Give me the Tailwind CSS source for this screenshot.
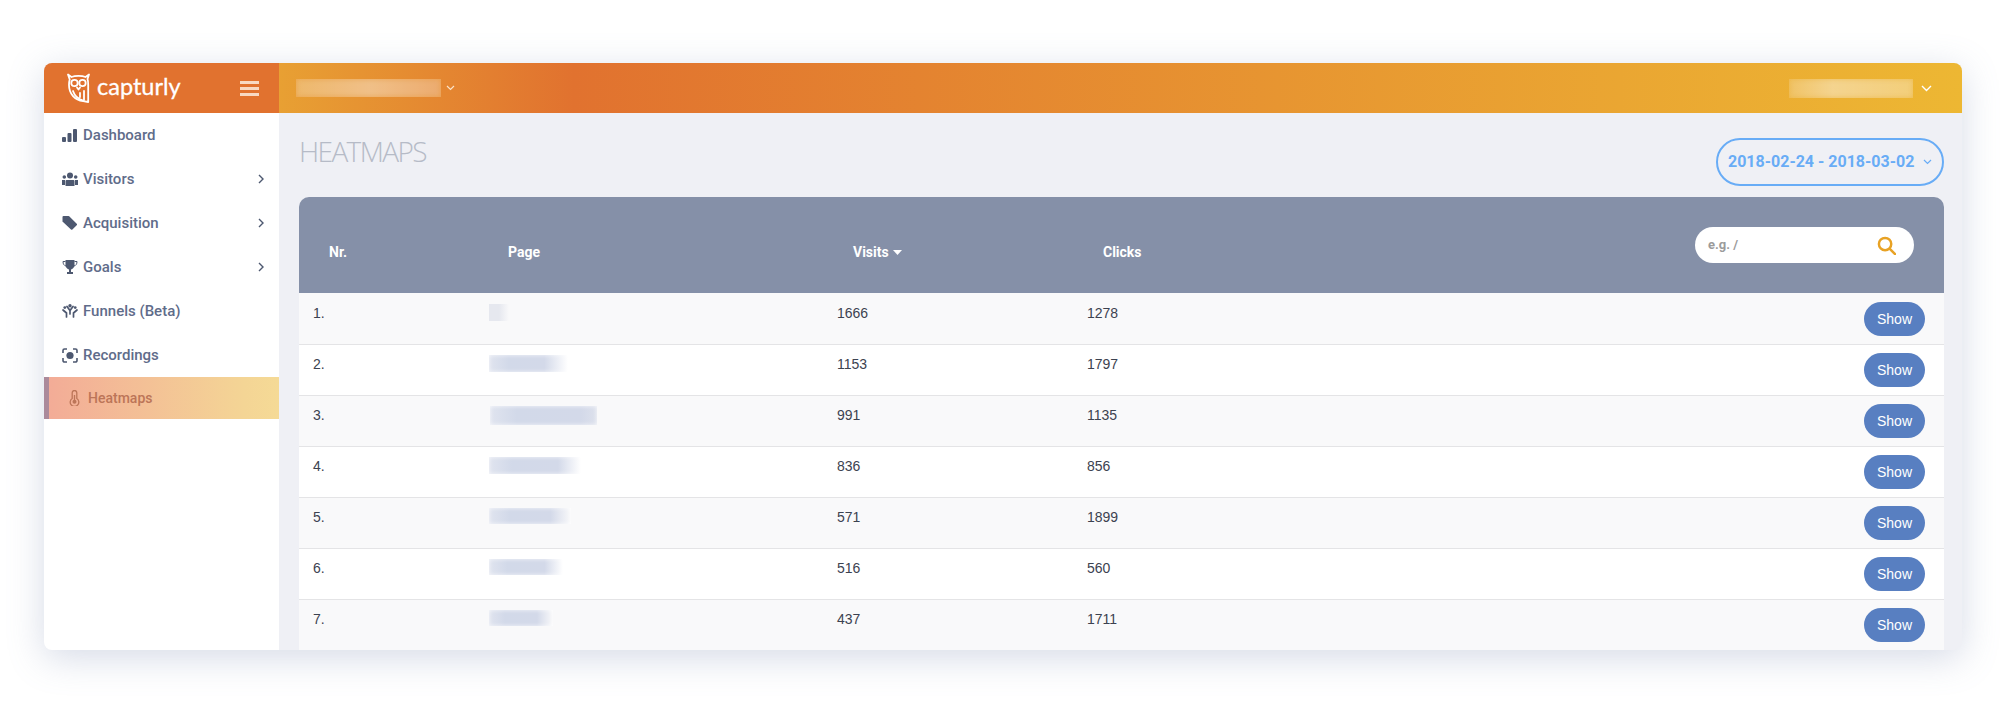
<!DOCTYPE html>
<html lang="en">
<head>
  <meta charset="UTF-8">
  <title>Heatmaps - Capturly</title>
  <script src="https://cdn.jsdelivr.net/npm/@tailwindcss/browser@4"></script>
</head>
<body class="bg-white h-[720px] overflow-hidden font-['Roboto',sans-serif]">
  <div class="pt-[63px] pl-[44px]">
    <!-- App window -->
    <div class="w-[1918px] h-[587px] rounded-[8px] overflow-hidden bg-[#eff0f5] shadow-[0_8px_36px_rgba(120,135,175,0.3)] flex flex-col">
      <!-- Top bar -->
      <header class="h-[50px] shrink-0 flex">
        <div class="w-[235px] shrink-0 bg-[#e1722f] flex items-center pl-[23px] pr-[20px]">
          <svg class="w-[23px] h-[30px] mr-[7px]" viewBox="0 0 23 30" fill="none" stroke="white" stroke-width="1.8" stroke-linejoin="round" stroke-linecap="round">
            <path d="M1 1.500l3.500 2.500C8 2.500 15 2.500 18.500 4L22 1.500l-1.500 4.500c.7 2 .7 4 .7 6V29l-5-.8C8 27 2 21 2 12c0-2 .2-4 .7-5.500z"/>
            <circle cx="7.500" cy="10" r="3.200"/>
            <circle cx="15.500" cy="10" r="3.200"/>
            <path d="M10 14.500l1.500 2 1.500-2"/>
            <path d="M6 18c1.500 4.500 5 8 10 9.500M17 27V18M13 24v-4"/>
          </svg>
          <span class="text-white text-[23.5px] leading-none font-['Lato',sans-serif] [-webkit-text-stroke:0.3px_white] -mt-[3px]">capturly</span>
          <div class="ml-auto flex flex-col gap-[3px] w-[19px] mt-[1px]">
            <span class="h-[3px] bg-[#f8d9c2]"></span>
            <span class="h-[3px] bg-[#f8d9c2]"></span>
            <span class="h-[3px] bg-[#f8d9c2]"></span>
          </div>
        </div>
        <div class="flex-1 flex items-center pl-[17px] pr-[30px] bg-[linear-gradient(90deg,#e8a033_0%,#e1722f_17.5%,#edb733_100%)]">
          <div class="w-[145px] h-[18px] bg-[linear-gradient(90deg,rgba(255,255,255,0.28),rgba(255,255,255,0.42)_50%,rgba(255,255,255,0.3))] shadow-[inset_0_0_5px_rgba(232,150,50,0.6)]"></div>
          <svg class="w-[9px] h-[6px] ml-[5px]" viewBox="0 0 9 6" fill="none" stroke="#fbe3c8" stroke-width="1.2"><path d="M1 1l3.500 3.500L8 1"/></svg>
          <div class="ml-auto w-[124px] h-[19px] bg-[linear-gradient(90deg,rgba(255,255,255,0.25),rgba(255,255,255,0.45)_35%,rgba(255,255,255,0.35))] shadow-[inset_0_0_5px_rgba(235,175,50,0.6)]"></div>
          <svg class="w-[11px] h-[7px] ml-[8px]" viewBox="0 0 11 7" fill="none" stroke="#fff" stroke-width="1.4"><path d="M1 1l4.500 4.500L10 1"/></svg>
        </div>
      </header>

      <div class="flex flex-1 min-h-0">
        <!-- Sidebar -->
        <aside class="w-[235px] shrink-0 bg-white text-[15px] font-medium text-[#5f6c8a]">
          <nav class="flex flex-col">
            <a class="h-[44px] flex items-center pl-[18px] pr-[15px]">
              <svg class="w-[16px] h-[14px] mr-[5px]" viewBox="0 0 16 14" fill="#4d5870"><rect x="0" y="9" width="4" height="5" rx="1"/><rect x="5.500" y="5" width="4" height="9" rx="1"/><rect x="11" y="1" width="4" height="13" rx="1"/></svg>
              Dashboard
            </a>
            <a class="h-[44px] flex items-center pl-[18px] pr-[15px]">
              <svg class="w-[16px] h-[14px] mr-[5px]" viewBox="0 0 16 14" fill="#4d5870"><circle cx="8" cy="3.500" r="3"/><circle cx="2.300" cy="5" r="1.800"/><circle cx="13.700" cy="5" r="1.800"/><path d="M4.500 8h7a1 1 0 0 1 1 1v5h-9V9a1 1 0 0 1 1-1zM0 8h3v5H0zM13 8h3v5h-3z"/></svg>
              Visitors
              <svg class="ml-auto w-[6px] h-[10px]" viewBox="0 0 6 10" fill="none" stroke="#4d5870" stroke-width="1.400"><path d="M1 1l4 4-4 4"/></svg>
            </a>
            <a class="h-[44px] flex items-center pl-[18px] pr-[15px]">
              <svg class="w-[16px] h-[14px] mr-[5px]" viewBox="0 0 16 14" fill="#4d5870"><path d="M1.500 0h5a1 1 0 0 1 .7.300l7.500 7.500a1 1 0 0 1 0 1.400l-4.300 4.300a1 1 0 0 1-1.400 0L1.300 6.300A1 1 0 0 1 .5 5.300V1a1 1 0 0 1 1-1z"/></svg>
              Acquisition
              <svg class="ml-auto w-[6px] h-[10px]" viewBox="0 0 6 10" fill="none" stroke="#4d5870" stroke-width="1.400"><path d="M1 1l4 4-4 4"/></svg>
            </a>
            <a class="h-[44px] flex items-center pl-[18px] pr-[15px]">
              <svg class="w-[16px] h-[14px] mr-[5px]" viewBox="0 0 16 14" fill="#4d5870"><path d="M3.500 0h9v5c0 2.500-2 4-3.500 4.500V12h2v2H5v-2h2V9.500C5.500 9 3.500 7.500 3.500 5z"/><path d="M3.500 1.500H1c0 2.500 1 4 3 4.500M12.500 1.500H15c0 2.500-1 4-3 4.500" fill="none" stroke="#4d5870" stroke-width="1"/></svg>
              Goals
              <svg class="ml-auto w-[6px] h-[10px]" viewBox="0 0 6 10" fill="none" stroke="#4d5870" stroke-width="1.400"><path d="M1 1l4 4-4 4"/></svg>
            </a>
            <a class="h-[44px] flex items-center pl-[18px] pr-[15px]">
              <svg class="w-[16px] h-[14px] mr-[5px]" viewBox="0 0 16 14" fill="none" stroke="#4d5870" stroke-width="1.700" stroke-linecap="round">
                <circle cx="8" cy="1.800" r="1.700" fill="#4d5870" stroke="none"/><circle cx="2.800" cy="3.600" r="1.400" fill="#4d5870" stroke="none"/><circle cx="13.200" cy="3.600" r="1.400" fill="#4d5870" stroke="none"/>
                <path d="M5 2.500L8 6.500L11 2.500M8 6.500V10M1 6L4.500 9V13M15 6L11.500 9V13"/>
              </svg>
              Funnels (Beta)
            </a>
            <a class="h-[44px] flex items-center pl-[18px] pr-[15px]">
              <svg class="w-[16px] h-[15px] mr-[5px]" viewBox="0 0 16 15" fill="none" stroke="#4d5870" stroke-width="1.600"><path d="M1 5V2.500A1.500 1.500 0 0 1 2.500 1H5M11 1h2.500A1.500 1.500 0 0 1 15 2.500V5M15 10v2.500a1.500 1.500 0 0 1-1.500 1.500H11M5 14H2.500A1.500 1.500 0 0 1 1 12.500V10"/><circle cx="8" cy="7.500" r="3.600" fill="#4d5870" stroke="none"/></svg>
              Recordings
            </a>
            <a class="h-[42px] flex items-center pl-[20px] border-l-[5px] border-[#ab8a9b] bg-[linear-gradient(90deg,#f3ac97_0%,#f4d595_85%,#f5da96_100%)] text-[#bc7558] text-[14px]">
              <svg class="w-[11px] h-[16px] mr-[8px]" viewBox="0 0 11 16" fill="none" stroke="#bc7558" stroke-width="1.300"><path d="M3.200 8.500V2.800a2.300 2.300 0 0 1 4.600 0v5.700a4.300 4.300 0 1 1-4.600 0z"/><circle cx="5.500" cy="11.700" r="2" fill="#bc7558" stroke="none"/><path d="M5.500 11V5"/></svg>
              Heatmaps
            </a>
          </nav>
        </aside>

        <!-- Content -->
        <main class="flex-1 min-w-0 pl-[20px] pr-[18px]">
          <div class="h-[84px] flex items-start justify-between">
            <h1 class="mt-[22px] text-[28px] leading-[32px] font-light text-[#b6bbc7] font-['Open_Sans',sans-serif] tracking-[-1.6px]">HEATMAPS</h1>
            <button class="mt-[25px] w-[228px] h-[48px] rounded-full border-2 border-[#68acf6] flex items-center pl-[10px] text-[#68acf6] font-bold text-[16px]">
              2018-02-24 - 2018-03-02
              <svg class="w-[9px] h-[6px] ml-[9px]" viewBox="0 0 9 6" fill="none" stroke="#68acf6" stroke-width="1.200"><path d="M1 1l3.500 3.500L8 1"/></svg>
            </button>
          </div>

          <div class="rounded-t-[10px] overflow-hidden">
            <div class="h-[96px] bg-[#8590a8] flex items-center text-white font-bold text-[14px] pl-[30px] pr-[30px]">
              <div class="w-[179px] pt-[14px]">Nr.</div>
              <div class="w-[345px] pt-[14px]">Page</div>
              <div class="w-[250px] pt-[14px] flex items-center">Visits
                <svg class="w-[9px] h-[5px] ml-[4px]" viewBox="0 0 9 5" fill="white"><path d="M0 0h9L4.500 5z"/></svg>
              </div>
              <div class="pt-[14px]">Clicks</div>
              <div class="ml-auto w-[219px] h-[36px] rounded-full bg-white flex items-center pl-[13px] pr-[18px] text-[#9b9b9b] text-[13px] font-bold">
                e.g. /
                <svg class="ml-auto w-[19px] h-[19px]" viewBox="0 0 20 20" fill="none" stroke="#e8a224" stroke-width="2.600"><circle cx="8.500" cy="8.500" r="6.500"/><path d="M13.500 13.500L19 19" stroke-linecap="round"/></svg>
              </div>
            </div>

            <div class="text-[#3c4250] text-[14px] font-['Liberation_Sans',sans-serif]">
              <div class="h-[51px] flex bg-[#f9f9fa] border-t border-[#f9f9fa] pl-[14px] pr-[19px]">
                <div class="w-[176px] pt-[9px]">1.</div>
                <div class="w-[348px] pt-[10px]"><div class="w-[20px] h-[17px] bg-[linear-gradient(90deg,#e6e8ef,#e6e8ef_50%,rgba(230,232,239,0))]"></div></div>
                <div class="w-[250px] pt-[9px]">1666</div>
                <div class="pt-[9px]">1278</div>
                <button class="ml-auto mt-[8px] w-[61px] h-[34px] rounded-full bg-[#587fc1] text-white text-[14px] font-medium">Show</button>
              </div>
              <div class="h-[51px] flex bg-white border-t border-[#e4e4e6] pl-[14px] pr-[19px]">
                <div class="w-[176px] pt-[9px]">2.</div>
                <div class="w-[348px] pt-[10px]"><div class="w-[79px] h-[17px] bg-[linear-gradient(90deg,#e0e4ef,#d2d9e9_25%,#d3d9e9_70%,rgba(211,217,233,0))] shadow-[inset_0_0_4px_rgba(255,255,255,0.8)]"></div></div>
                <div class="w-[250px] pt-[9px]">1153</div>
                <div class="pt-[9px]">1797</div>
                <button class="ml-auto mt-[8px] w-[61px] h-[34px] rounded-full bg-[#587fc1] text-white text-[14px] font-medium">Show</button>
              </div>
              <div class="h-[51px] flex bg-[#f9f9fa] border-t border-[#e4e4e6] pl-[14px] pr-[19px]">
                <div class="w-[176px] pt-[9px]">3.</div>
                <div class="w-[348px] pt-[10px]"><div class="w-[107px] h-[19px] ml-[1px] bg-[linear-gradient(90deg,#e0e4ef,#d2d9e9_25%,#d3d9e9_85%,#dde1ec)] shadow-[inset_0_0_4px_rgba(255,255,255,0.8)]"></div></div>
                <div class="w-[250px] pt-[9px]">991</div>
                <div class="pt-[9px]">1135</div>
                <button class="ml-auto mt-[8px] w-[61px] h-[34px] rounded-full bg-[#587fc1] text-white text-[14px] font-medium">Show</button>
              </div>
              <div class="h-[51px] flex bg-white border-t border-[#e4e4e6] pl-[14px] pr-[19px]">
                <div class="w-[176px] pt-[9px]">4.</div>
                <div class="w-[348px] pt-[10px]"><div class="w-[92px] h-[17px] bg-[linear-gradient(90deg,#e0e4ef,#d2d9e9_25%,#d3d9e9_75%,rgba(211,217,233,0))] shadow-[inset_0_0_4px_rgba(255,255,255,0.8)]"></div></div>
                <div class="w-[250px] pt-[9px]">836</div>
                <div class="pt-[9px]">856</div>
                <button class="ml-auto mt-[8px] w-[61px] h-[34px] rounded-full bg-[#587fc1] text-white text-[14px] font-medium">Show</button>
              </div>
              <div class="h-[51px] flex bg-[#f9f9fa] border-t border-[#e4e4e6] pl-[14px] pr-[19px]">
                <div class="w-[176px] pt-[9px]">5.</div>
                <div class="w-[348px] pt-[10px]"><div class="w-[82px] h-[16px] bg-[linear-gradient(90deg,#e0e4ef,#d2d9e9_25%,#d3d9e9_75%,rgba(211,217,233,0))] shadow-[inset_0_0_4px_rgba(255,255,255,0.8)]"></div></div>
                <div class="w-[250px] pt-[9px]">571</div>
                <div class="pt-[9px]">1899</div>
                <button class="ml-auto mt-[8px] w-[61px] h-[34px] rounded-full bg-[#587fc1] text-white text-[14px] font-medium">Show</button>
              </div>
              <div class="h-[51px] flex bg-white border-t border-[#e4e4e6] pl-[14px] pr-[19px]">
                <div class="w-[176px] pt-[9px]">6.</div>
                <div class="w-[348px] pt-[10px]"><div class="w-[74px] h-[16px] bg-[linear-gradient(90deg,#e0e4ef,#d2d9e9_25%,#d3d9e9_75%,rgba(211,217,233,0))] shadow-[inset_0_0_4px_rgba(255,255,255,0.8)]"></div></div>
                <div class="w-[250px] pt-[9px]">516</div>
                <div class="pt-[9px]">560</div>
                <button class="ml-auto mt-[8px] w-[61px] h-[34px] rounded-full bg-[#587fc1] text-white text-[14px] font-medium">Show</button>
              </div>
              <div class="h-[51px] flex bg-[#f9f9fa] border-t border-[#e4e4e6] pl-[14px] pr-[19px]">
                <div class="w-[176px] pt-[9px]">7.</div>
                <div class="w-[348px] pt-[10px]"><div class="w-[64px] h-[16px] bg-[linear-gradient(90deg,#e0e4ef,#d2d9e9_25%,#d3d9e9_75%,rgba(211,217,233,0))] shadow-[inset_0_0_4px_rgba(255,255,255,0.8)]"></div></div>
                <div class="w-[250px] pt-[9px]">437</div>
                <div class="pt-[9px]">1711</div>
                <button class="ml-auto mt-[8px] w-[61px] h-[34px] rounded-full bg-[#587fc1] text-white text-[14px] font-medium">Show</button>
              </div>
            </div>
          </div>
        </main>
      </div>
    </div>
  </div>
</body>
</html>
